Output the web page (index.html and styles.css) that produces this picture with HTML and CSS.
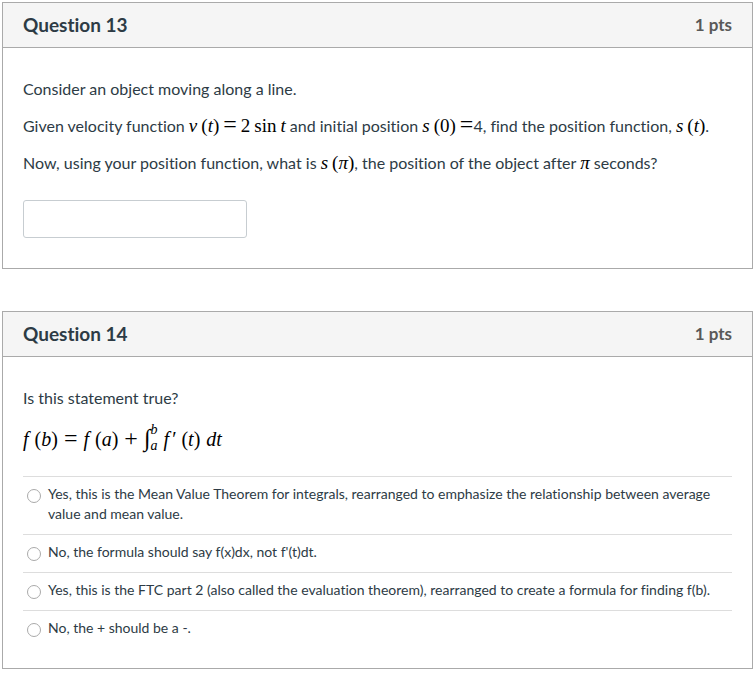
FILE: index.html
```html
<!DOCTYPE html>
<html lang="en">
<head>
  <meta charset="UTF-8">
  <meta name="viewport" content="width=device-width, initial-scale=1">
  <title>Quiz</title>
  <link rel="stylesheet" href="styles.css">
</head>
<body>
  <form class="quiz">

    <section class="question">
      <div class="question-header">
        <h2>Question 13</h2>
        <span class="points">1 pts</span>
      </div>
      <div class="question-body">
        <p>Consider an object moving along a line.</p>
        <p>Given velocity function <span class="math"><i>v</i><span>(<i>t</i>)</span><span class="rel">=</span><span>2</span><span>sin</span><i>t</i></span> and initial position <span class="math"><i>s</i><span>(0)</span><span class="rel">=</span></span>4, find the position function, <span class="math"><i>s</i><span>(<i>t</i>)</span></span>.</p>
        <p><label for="answer-13">Now, using your position function, what is <span class="math"><i>s</i><span>(<i>π</i>)</span></span>, the position of the object after <span class="math"><i>π</i></span> seconds?</label></p>
        <input type="text" class="answer-input" id="answer-13">
      </div>
    </section>

    <section class="question">
      <div class="question-header">
        <h2>Question 14</h2>
        <span class="points">1 pts</span>
      </div>
      <div class="question-body">
        <p>Is this statement true?</p>
        <p class="formula"><span class="math"><i>f</i><span>(<i>b</i>)</span><span class="rel">=</span><i>f</i><span>(<i>a</i>)</span><span class="rel">+</span><span class="integral"><span class="int-sign">∫</span><span class="limits"><i>b</i><i>a</i></span></span><span class="prime"><i>f</i><i>′</i></span><span>(<i>t</i>)</span><i>dt</i></span></p>
        <div class="answers">
          <label class="answer">
            <input type="radio" name="q14">
            <span>Yes, this is the Mean Value Theorem for integrals, rearranged to emphasize the relationship between average value and mean value.</span>
          </label>
          <label class="answer">
            <input type="radio" name="q14">
            <span>No, the formula should say f(x)dx, not f'(t)dt.</span>
          </label>
          <label class="answer">
            <input type="radio" name="q14">
            <span>Yes, this is the FTC part 2 (also called the evaluation theorem), rearranged to create a formula for finding f(b).</span>
          </label>
          <label class="answer">
            <input type="radio" name="q14">
            <span>No, the + should be a -.</span>
          </label>
        </div>
      </div>
    </section>

  </form>
</body>
</html>
```
FILE: styles.css
```css
* {
  box-sizing: border-box;
}
body {
  margin: 0;
  background: #fff;
  color: #2d3b45;
  font-family: Lato, "Helvetica Neue", Arial, sans-serif;
  font-size: 16px;
  line-height: 24px;
  font-variant-ligatures: none;
}
.quiz {
  display: flex;
  flex-direction: column;
  gap: 42px;
  padding: 2px 3px 2px 2px;
}
.question {
  border: 1px solid #aaa;
}
.question-header {
  display: flex;
  align-items: center;
  justify-content: space-between;
  padding: 10px 20px;
  background: #f5f5f5;
  border-bottom: 1px solid #aaa;
}
.question-header h2 {
  margin: 0;
  font-size: 19px;
  font-weight: bold;
}
.points {
  color: #595959;
  font-size: 17px;
  font-weight: bold;
}
.question-body {
  padding: 29px 20px;
}
.question-body > :last-child {
  margin-bottom: 1px;
}
p {
  margin: 0 0 13px;
}

/* math */
.math {
  display: inline-flex;
  align-items: baseline;
  gap: 4px;
  color: #000;
  font-family: "Liberation Serif", "Times New Roman", serif;
  font-size: 19px;
  line-height: 20px;
}
.math .rel {
  font-size: 24px;
}
.formula {
  display: flex;
  align-items: center;
  height: 30px;
  margin-bottom: 23px;
}
.formula .math {
  gap: 6px;
  font-size: 20px;
}
.integral {
  display: inline-flex;
  align-items: center;
}
.int-sign {
  font-size: 24px;
}
.limits {
  display: flex;
  flex-direction: column;
  font-size: 14px;
  line-height: 16px;
}
.prime {
  display: inline-flex;
  gap: 2px;
}

.answer-input {
  display: block;
  width: 224px;
  height: 38px;
  margin-top: 25px;
  padding: 8px;
  border: 1px solid #c7cdd1;
  border-radius: 3px;
  font: inherit;
  color: inherit;
}
.answer {
  display: flex;
  align-items: flex-start;
  padding: 7px 0 10px;
  border-top: 1px solid #ddd;
  font-size: 14px;
  line-height: 20px;
}
.answer:last-child {
  padding-bottom: 0;
}
.answer input {
  appearance: none;
  flex: none;
  width: 14px;
  height: 14px;
  margin: 5px 7px 0 4px;
  border: 1px solid #aaa;
  border-radius: 50%;
  background: #fff;
}
.answer input:checked {
  background: #2d3b45;
  box-shadow: inset 0 0 0 3px #fff;
}
```
